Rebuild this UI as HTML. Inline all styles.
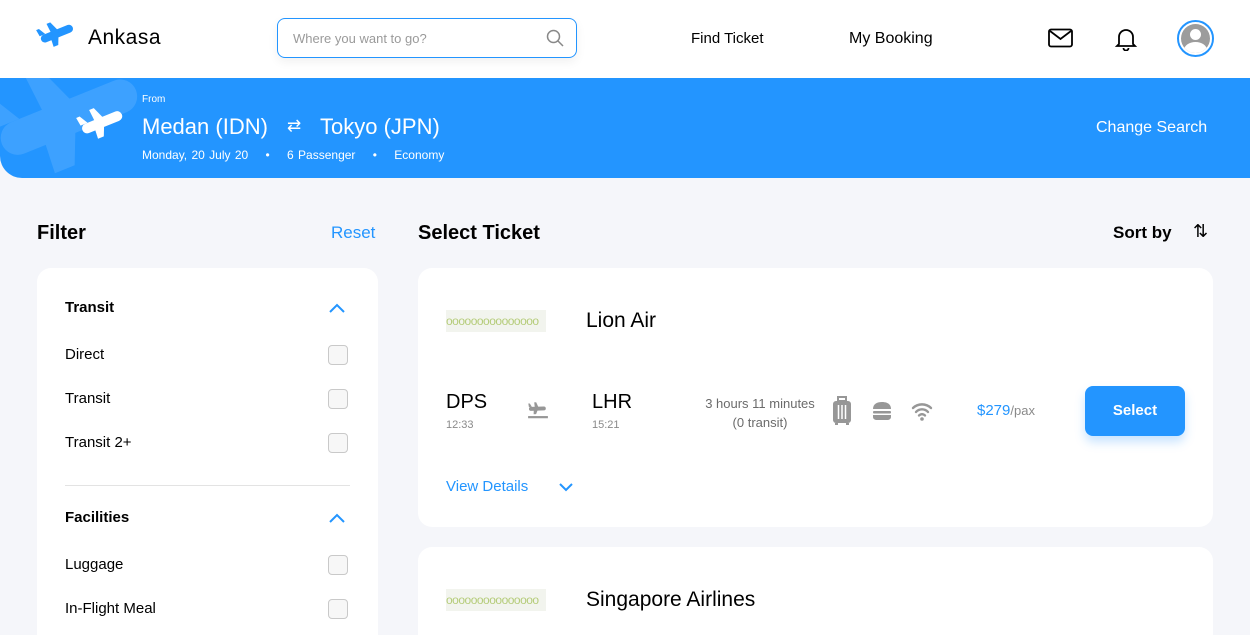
<!DOCTYPE html>
<html style="width:1250px;height:635px;overflow:hidden"><head><style>
*{margin:0;padding:0;box-sizing:border-box}
body{width:1250px;height:635px;overflow:hidden;background:#f5f6fa;font-family:"Liberation Sans",sans-serif;color:#000;position:relative}
.a{position:absolute}
.hdr{left:0;top:0;width:1250px;height:78px;background:#fff}
.blue{left:0;top:78px;width:1250px;height:100px;background:#2395ff;border-radius:0 0 0 22px;overflow:hidden}
.card{background:#fff;border-radius:14px}
.cb{width:20px;height:20px;border:1px solid #c9c9c9;border-radius:4px;background:#f7f7f7;position:absolute;left:291px}
.lab{font-size:15px;position:absolute;left:28px}
</style></head><body>
<svg width="0" height="0" style="position:absolute"><defs>
<g id="pl"><g transform="rotate(-22 20 14)"><rect x="4" y="10" width="34" height="8" rx="4"/><path d="M14 11l10 0-6 14h-5z"/><path d="M16 17l8 0-5-12h-4z" transform="translate(0,-4)"/><path d="M4 10l6 0-4-7h-3z"/></g></g>
</defs></svg>
<div class="a hdr">
 <svg class="a" style="left:36px;top:20px" width="40" height="30" viewBox="0 0 40 30"><use href="#pl" fill="#2395ff"/></svg>
 <div class="a" style="left:88px;top:26px;font-size:21px;letter-spacing:.5px">Ankasa</div>
 <div class="a" style="left:277px;top:18px;width:300px;height:40px;border:1px solid #2395ff;border-radius:8px;box-shadow:0 4px 10px rgba(0,0,0,.06)">
  <div class="a" style="left:15px;top:12px;font-size:13px;color:#9a9a9a">Where you want to go?</div>
  <svg class="a" style="left:268px;top:10px" width="18" height="18" viewBox="0 0 18 18"><circle cx="7.5" cy="7.5" r="6" fill="none" stroke="#888" stroke-width="1.5"/><path d="M12 12l5 5" stroke="#888" stroke-width="1.5"/></svg>
 </div>
 <div class="a" style="left:691px;top:30px;font-size:15px">Find Ticket</div>
 <div class="a" style="left:849px;top:30px;font-size:16px">My Booking</div>
 <svg class="a" style="left:1048px;top:28px" width="25" height="20" viewBox="0 0 25 20"><rect x="1" y="1.5" width="23" height="17" rx="2" fill="none" stroke="#000" stroke-width="1.8"/><path d="M2 3l10.5 8L23 3" fill="none" stroke="#000" stroke-width="1.8"/></svg>
 <svg class="a" style="left:1114px;top:26px" width="24" height="25" viewBox="0 0 24 25"><path d="M5 18V11a7 7 0 0114 0v7l2 2H3z" fill="none" stroke="#000" stroke-width="1.8"/><path d="M9.5 22a2.5 2.5 0 005 0" fill="none" stroke="#000" stroke-width="1.8"/></svg>
 <div class="a" style="left:1177px;top:20px;width:37px;height:37px;border-radius:50%;border:2px solid #2395ff;background:#fff;overflow:hidden">
  <div class="a" style="left:2px;top:2px;width:29px;height:29px;border-radius:50%;background:#9c9c9c;overflow:hidden">
   <div class="a" style="left:9px;top:5px;width:11px;height:11px;border-radius:50%;background:#fff"></div>
   <div class="a" style="left:3px;top:18px;width:23px;height:16px;border-radius:50%;background:#fff"></div>
  </div>
 </div>
</div>
<div class="a blue">
 <svg class="a" style="left:-20px;top:-20px" width="170" height="130" viewBox="0 0 40 30"><use href="#pl" fill="#fff" opacity=".12"/></svg>
 <svg class="a" style="left:76px;top:27px" width="50" height="38" viewBox="0 0 40 30"><use href="#pl" fill="#fff"/></svg>
 <div class="a" style="left:142px;top:16px;font-size:10px;color:#fff">From</div>
 <div class="a" style="left:142px;top:36px;font-size:22px;color:#fff">Medan (IDN)</div>
 <div class="a" style="left:287px;top:38px;font-size:17px;color:#fff">⇄</div>
 <div class="a" style="left:320px;top:36px;font-size:22px;color:#fff">Tokyo (JPN)</div>
 <div class="a" style="left:142px;top:70px;font-size:12px;color:#fff;word-spacing:1px">Monday, 20 July 20 &nbsp;&nbsp; • &nbsp;&nbsp; 6 Passenger &nbsp;&nbsp; • &nbsp;&nbsp; Economy</div>
 <div class="a" style="left:1096px;top:41px;font-size:16px;color:#fff">Change Search</div>
</div>
<div class="a" style="left:37px;top:222px;font-size:20px;font-weight:bold">Filter</div>
<div class="a" style="left:331px;top:223px;font-size:17px;color:#2395ff">Reset</div>
<div class="a card" style="left:37px;top:268px;width:341px;height:367px;border-radius:14px 14px 0 0">
 <div class="lab" style="top:31px;font-weight:bold">Transit</div>
 <svg class="a" style="left:291px;top:34px" width="18" height="12"><path d="M2 10l7-7 7 7" fill="none" stroke="#2395ff" stroke-width="2"/></svg>
 <div class="lab" style="top:78px">Direct</div><div class="cb" style="top:77px"></div>
 <div class="lab" style="top:122px">Transit</div><div class="cb" style="top:121px"></div>
 <div class="lab" style="top:166px">Transit 2+</div><div class="cb" style="top:165px"></div>
 <div class="a" style="left:28px;top:217px;width:285px;height:1px;background:#e3e3e3"></div>
 <div class="lab" style="top:241px;font-weight:bold">Facilities</div>
 <svg class="a" style="left:291px;top:244px" width="18" height="12"><path d="M2 10l7-7 7 7" fill="none" stroke="#2395ff" stroke-width="2"/></svg>
 <div class="lab" style="top:288px">Luggage</div><div class="cb" style="top:287px"></div>
 <div class="lab" style="top:332px">In-Flight Meal</div><div class="cb" style="top:331px"></div>
</div>
<div class="a" style="left:418px;top:222px;font-size:20px;font-weight:bold">Select Ticket</div>
<div class="a" style="left:1113px;top:223px;font-size:17px;font-weight:bold">Sort by</div>
<div class="a" style="left:1193px;top:221px;font-size:18px">⇅</div>
<div class="a card" style="left:418px;top:268px;width:795px;height:259px">
 <div class="a" style="left:28px;top:42px;width:100px;height:22px;background:#f2f4ee;color:#b5cc7a;font-size:12px;letter-spacing:-.5px;line-height:22px;overflow:hidden;white-space:nowrap">ooooooooooooooo</div>
 <div class="a" style="left:168px;top:41px;font-size:21px">Lion Air</div>
 <div class="a" style="left:28px;top:123px;font-size:20px">DPS</div>
 <div class="a" style="left:28px;top:151px;font-size:11px;color:#8a8a8a">12:33</div>
 <svg class="a" style="left:109px;top:130px" width="22" height="24" viewBox="0 0 40 30"><g transform="scale(.9) rotate(20 20 14)"><use href="#pl" fill="#979797"/></g><rect x="2" y="26" width="36" height="4" fill="#979797"/></svg>
 <div class="a" style="left:174px;top:123px;font-size:20px">LHR</div>
 <div class="a" style="left:174px;top:151px;font-size:11px;color:#8a8a8a">15:21</div>
 <div class="a" style="left:248px;top:126px;width:188px;text-align:center;font-size:13px;color:#6b6b6b;line-height:19px">3 hours 11 minutes<br>(0 transit)</div>
 <svg class="a" style="left:413px;top:128px" width="22" height="30" viewBox="0 0 22 30"><rect x="7" y="1" width="8" height="4" fill="none" stroke="#979797" stroke-width="2"/><rect x="2" y="5" width="18" height="22" rx="3" fill="#979797"/><path d="M7.5 9v14M11 9v14M14.5 9v14" stroke="#fff" stroke-width="1.5"/><rect x="4" y="27" width="3" height="2" fill="#979797"/><rect x="15" y="27" width="3" height="2" fill="#979797"/></svg>
 <svg class="a" style="left:454px;top:133px" width="20" height="20" viewBox="0 0 20 20"><path d="M1 8C1 3 5 1 10 1s9 2 9 7z" fill="#979797"/><rect x="1" y="10" width="18" height="2.5" rx="1" fill="#979797"/><path d="M1 14h18v2c0 2-2 3-4 3H5c-2 0-4-1-4-3z" fill="#979797"/></svg>
 <svg class="a" style="left:493px;top:133px" width="22" height="20" viewBox="0 0 22 20"><path d="M2 7a13 13 0 0118 0M5 11a8 8 0 0112 0M8 14.5a4 4 0 016 0" fill="none" stroke="#979797" stroke-width="2.4" stroke-linecap="round"/><circle cx="11" cy="18" r="1.8" fill="#979797"/></svg>
 <div class="a" style="left:559px;top:134px;font-size:15px;color:#2395ff">$279<span style="color:#8a8a8a;font-size:13px">/pax</span></div>
 <div class="a" style="left:667px;top:118px;width:100px;height:50px;background:#2395ff;border-radius:8px;color:#fff;font-size:15px;font-weight:bold;text-align:center;line-height:50px;box-shadow:0 6px 10px rgba(35,149,255,.25)">Select</div>
 <div class="a" style="left:28px;top:210px;font-size:15px;color:#2395ff">View Details</div>
 <svg class="a" style="left:140px;top:213px" width="16" height="12"><path d="M2 3l6 6 6-6" fill="none" stroke="#2395ff" stroke-width="2"/></svg>
</div>
<div class="a card" style="left:418px;top:547px;width:795px;height:88px;border-radius:14px 14px 0 0">
 <div class="a" style="left:28px;top:42px;width:100px;height:22px;background:#f2f4ee;color:#b5cc7a;font-size:12px;letter-spacing:-.5px;line-height:22px;overflow:hidden;white-space:nowrap">ooooooooooooooo</div>
 <div class="a" style="left:168px;top:41px;font-size:21px">Singapore Airlines</div>
</div>
</body></html>
